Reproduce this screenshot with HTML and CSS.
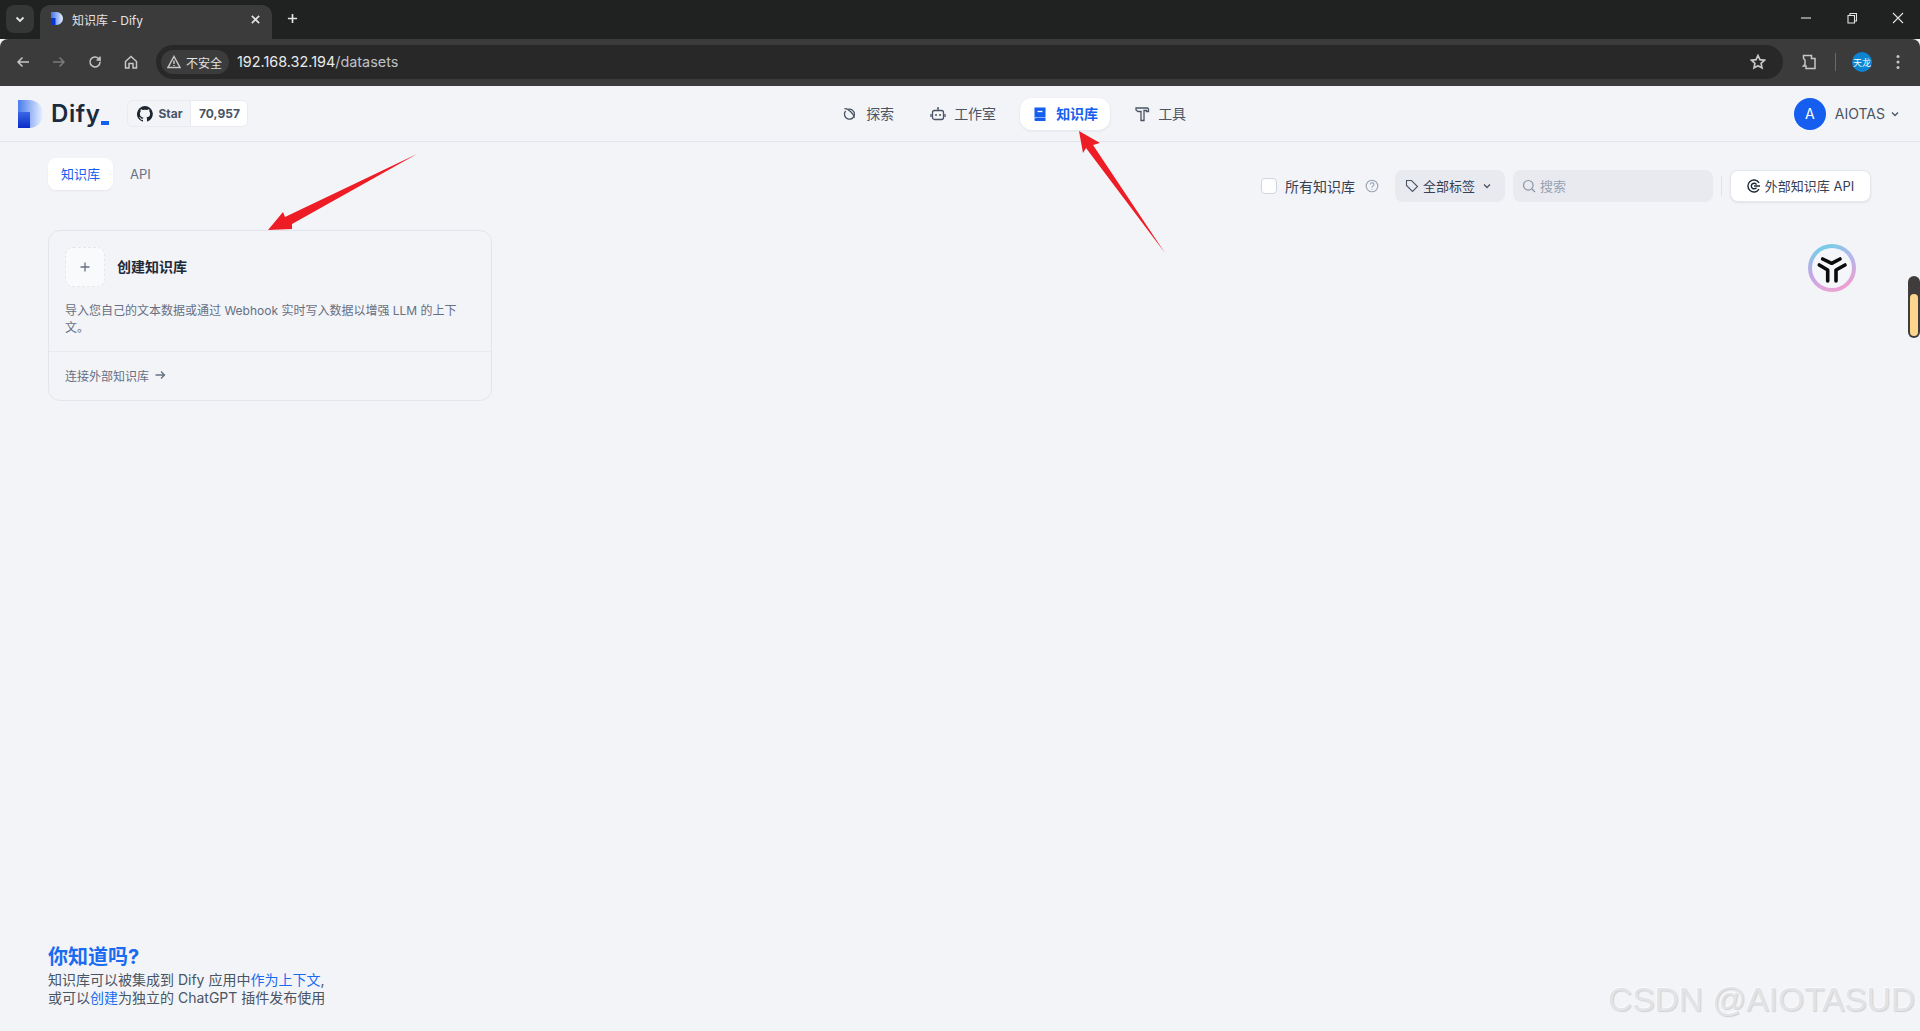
FILE: index.html
```html
<!DOCTYPE html>
<html lang="zh-CN">
<head>
<meta charset="utf-8">
<title>知识库 - Dify</title>
<link rel="stylesheet" href="styles.css">
</head>
<body>
<div class="browser">
  <div class="tabstrip">
    <div class="tab-search"><svg class="ic12" viewBox="0 0 12 12"><path d="M2.500 4.500 6 8l3.500-3.500" class="st-w2"/></svg></div>
    <div class="tab">
      <svg class="favicon" viewBox="0 0 14 14"><defs><linearGradient id="fg" x1="0" y1="0" x2="1" y2="0"><stop offset="0" stop-color="#3f72ea"/><stop offset="1" stop-color="#e8f0ff"/></linearGradient></defs><path d="M1 0h5.500a6.500 6.500 0 0 1 0 13H1z" fill="url(#fg)"/><path d="M1 6h4.500v7H1z" fill="#0b34d8"/></svg>
      <span class="tab-title">知识库 - Dify</span>
      <svg class="tab-close" viewBox="0 0 12 12"><path d="M2 2l8 8M10 2l-8 8" class="st-w2"/></svg>
    </div>
    <svg class="new-tab" viewBox="0 0 12 12"><path d="M6 1v10M1 6h10" class="st-w2"/></svg>
    <div class="win-btns">
      <svg class="win" viewBox="0 0 12 12"><path d="M1 6h10" class="st-w1"/></svg>
      <svg class="win" viewBox="0 0 12 12"><path d="M2 3.500h6.500V11H2zM4 3.500V1.500h6.500V9H8.500" class="st-w1"/></svg>
      <svg class="win" viewBox="0 0 12 12"><path d="M1 1l10 10M11 1L1 11" class="st-w1"/></svg>
    </div>
  </div>
  <div class="toolbar">
    <div class="tb-nav">
      <svg class="tb-ic" viewBox="0 0 14 14"><path d="M13 7H2M6.500 2.500 2 7l4.500 4.500" class="st-g"/></svg>
      <svg class="tb-ic dim" viewBox="0 0 14 14"><path d="M1 7h11M7.500 2.500 12 7l-4.500 4.500" class="st-g"/></svg>
      <svg class="tb-ic" viewBox="0 0 14 14"><path d="M12 7a5 5 0 1 1-1.500-3.600L12 5V1.500M12 5H8.500" class="st-g"/></svg>
      <svg class="tb-ic" viewBox="0 0 14 14"><path d="M1.500 6.500 7 1.500l5.500 5V13H9V8.500H5V13H1.500z" class="st-g"/></svg>
    </div>
    <div class="omnibox">
      <div class="chip">
        <svg class="chip-ic" viewBox="0 0 14 14"><path d="M7 1.500 13 12.500H1zM7 5.500v3.500M7 10v1" class="st-g"/></svg>
        <span>不安全</span>
      </div>
      <div class="url">192.168.32.194<span class="url-path">/datasets</span></div>
      <svg class="tb-ic star" viewBox="0 0 14 14"><path d="M7 1.300l1.700 3.700 4 .5-3 2.700.8 4L7 10.200l-3.500 2 .8-4-3-2.700 4-.5z" class="st-g"/></svg>
    </div>
    <svg class="tb-ext" viewBox="0 0 16 16"><path d="M2.500 1.500h8v3h3.500v10H5V12H2.500l1.500-1.500V6L2.500 4.500z" class="st-g"/></svg>
    <span class="tb-sep"></span>
    <span class="profile">天龙</span>
    <svg class="tb-menu" viewBox="0 0 4 16"><circle cx="2" cy="2.500" r="1.500"/><circle cx="2" cy="8" r="1.500"/><circle cx="2" cy="13.500" r="1.500"/></svg>
  </div>
</div>

<div class="app">
  <header class="header">
    <div class="brand">
      <div class="logo">
        <svg class="logo-mark" viewBox="0 0 25 28"><defs><linearGradient id="lg" x1="0" y1="0" x2="1" y2="0"><stop offset="0" stop-color="#4a7cec"/><stop offset="1" stop-color="#eaf1ff"/></linearGradient><linearGradient id="lg2" x1="0" y1="0" x2="0" y2="1"><stop offset="0" stop-color="#3a68e6"/><stop offset="1" stop-color="#0a2bc8"/></linearGradient></defs><path d="M0 0h11a14 14 0 0 1 0 28H0z" fill="url(#lg)"/><path d="M0 12h12v16H0z" fill="url(#lg2)"/></svg>
        <span class="logo-text">Dify</span><span class="logo-cursor"></span>
      </div>
      <div class="gh">
        <div class="gh-left">
          <svg class="gh-ic" viewBox="0 0 16 16"><path d="M8 0a8 8 0 0 0-2.500 15.600c.4.100.5-.2.500-.4v-1.400c-2.200.5-2.700-1-2.700-1-.4-.9-.9-1.200-.9-1.200-.7-.5.100-.5.100-.5.800.100 1.200.8 1.200.8.700 1.200 1.900.9 2.300.7.100-.5.300-.9.500-1.100-1.800-.2-3.600-.9-3.600-4 0-.9.300-1.600.8-2.100-.1-.2-.4-1 .1-2.100 0 0 .7-.2 2.200.8a7.600 7.600 0 0 1 4 0c1.500-1 2.200-.8 2.200-.8.400 1.100.2 1.900.1 2.100.5.600.8 1.300.8 2.100 0 3.100-1.900 3.700-3.700 3.900.3.300.6.800.6 1.500v2.200c0 .2.100.5.600.4A8 8 0 0 0 8 0z"/></svg>
          <span>Star</span>
        </div>
        <div class="gh-count">70,957</div>
      </div>
    </div>
    <nav class="nav">
      <a class="nav-item">
        <svg class="ic16" viewBox="0 0 16 16"><path d="M3.600 5A5 5 0 1 0 6 3.400" class="st-n"/><path d="M2.500 2.800c1.600-.8 4 .8 6.200 3s3.800 4.800 3.300 6.200" class="st-n"/></svg>
        <span>探索</span>
      </a>
      <a class="nav-item">
        <svg class="ic16" viewBox="0 0 16 16"><rect x="2.500" y="4.500" width="11" height="9" rx="2" class="st-n"/><path d="M8 4.500V2M1 8v3M15 8v3" class="st-n"/><circle cx="8" cy="1.800" r=".9" fill="#495464"/><circle cx="6" cy="9" r="1" fill="#495464"/><circle cx="10" cy="9" r="1" fill="#495464"/></svg>
        <span>工作室</span>
      </a>
      <a class="nav-item active">
        <svg class="ic16" viewBox="0 0 16 16"><path d="M2.500 1.500h11v10h-9a1.500 1.500 0 0 0-2 1V1.500zM2.500 13a1.500 1.500 0 0 1 1.500-1h9.500v3H4a1.500 1.500 0 0 1-1.500-2z" fill="#155eef"/><path d="M5.500 5.500h5" stroke="#fff" stroke-width="1.300"/></svg>
        <span>知识库</span>
      </a>
      <a class="nav-item">
        <svg class="ic16" viewBox="0 0 16 16"><path d="M2 2h11.500l1 1v2.500h-2V4.500H10V14.500H7V5.500H4L2 4z" class="st-n"/></svg>
        <span>工具</span>
      </a>
    </nav>
    <div class="account">
      <span class="avatar">A</span>
      <span class="account-name">AIOTAS</span>
      <svg class="chev" viewBox="0 0 10 10"><path d="M2 3.500 5 6.500l3-3" class="st-n"/></svg>
    </div>
  </header>

  <main class="main">
    <div class="topbar">
      <div class="tabs">
        <span class="seg active">知识库</span>
        <span class="seg">API</span>
      </div>
      <div class="filters">
        <label class="all-sets">
          <span class="check"></span>
          <span>所有知识库</span>
          <svg class="ic14 help" viewBox="0 0 14 14"><circle cx="7" cy="7" r="5.800" class="st-l"/><path d="M5.300 5.500a1.800 1.800 0 1 1 2.600 1.600C7.300 7.500 7 7.800 7 8.500M7 9.800v.9" class="st-l"/></svg>
        </label>
        <div class="tag-btn">
          <svg class="ic14" viewBox="0 0 14 14"><path d="M1.500 1.500h5l6 6-5 5-6-6zM4 4v.1" class="st-d"/></svg>
          <span>全部标签</span>
          <svg class="chev" viewBox="0 0 10 10"><path d="M2 3.500 5 6.500l3-3" class="st-n"/></svg>
        </div>
        <div class="search">
          <svg class="ic14" viewBox="0 0 14 14"><circle cx="6.300" cy="6.300" r="4.800" class="st-s"/><path d="M10 10l3 3" class="st-s"/></svg>
          <span>搜索</span>
        </div>
        <span class="vsep"></span>
        <div class="api-btn">
          <svg class="ic14" viewBox="0 0 14 14"><path d="M12 3.800A6 6 0 1 0 12 10.200" class="st-k"/><path d="M9.500 5.500A2.800 2.800 0 1 0 9.500 8.500M7 7h6" class="st-k"/></svg>
          <span>外部知识库 API</span>
        </div>
      </div>
    </div>

    <section class="card">
      <div class="card-body">
        <div class="card-head">
          <div class="plus"><svg class="ic12" viewBox="0 0 12 12"><path d="M6 1.500v9M1.500 6h9" class="st-p"/></svg></div>
          <h2 class="card-title">创建知识库</h2>
        </div>
        <p class="card-desc">导入您自己的文本数据或通过 Webhook 实时写入数据以增强 LLM 的上下文。</p>
      </div>
      <div class="card-foot">
        <span>连接外部知识库</span>
        <svg class="ic12" viewBox="0 0 12 12"><path d="M1.500 6h9M7 2.500 10.500 6 7 9.500" class="st-p"/></svg>
      </div>
    </section>

    <footer class="tip">
      <h3 class="tip-title">你知道吗?</h3>
      <p class="tip-text">知识库可以被集成到 Dify 应用中<a>作为上下文</a>,<br>或可以<a>创建</a>为独立的 ChatGPT 插件发布使用</p>
    </footer>
  </main>
</div>

<div class="bot">
  <svg class="bot-y" viewBox="4 4 40 40"><path d="M14.700 15l9 4.300 8.300-4.300M11.300 21l8.400 5v11M37 21l-9 5v11" fill="none" stroke="#0b0b0b" stroke-width="3.600" stroke-linecap="round" stroke-linejoin="round"/></svg>
</div>
<div class="pill-widget"><span class="pill-fill"></span></div>

<svg class="arrows" viewBox="0 0 1920 1031">
  <polygon points="1079,131 1100,143 1093,145 1165,253 1086,148 1083,153" fill="#ee1c25"/>
  <polygon points="268,230 283,212 285,217 417,154 292,224 292,229" fill="#ee1c25"/>
</svg>
<div class="watermark">CSDN @AIOTASUD</div>
</body>
</html>
```

FILE: styles.css
```css
* { box-sizing: border-box; }
html, body { margin: 0; padding: 0; height: 100%; overflow: hidden; }
body {
  font-family: Inter, "Noto Sans CJK SC", sans-serif;
  background: #f2f4f8;
  color: #354052;
  display: flex;
  flex-direction: column;
  position: relative;
}
svg { display: block; flex: none; }
h2, h3, p { margin: 0; }

.st-w2 { fill: none; stroke: #e3e3e3; stroke-width: 1.800; }
.st-w1 { fill: none; stroke: #e3e3e3; stroke-width: 1.100; }
.st-g { fill: none; stroke: #c7c7c7; stroke-width: 1.500; }
.st-n { fill: none; stroke: #495464; stroke-width: 1.300; }
.st-l { fill: none; stroke: #98a2b2; stroke-width: 1.100; }
.st-d { fill: none; stroke: #495464; stroke-width: 1.100; }
.st-s { fill: none; stroke: #8a94a6; stroke-width: 1.200; }
.st-k { fill: none; stroke: #1f2a37; stroke-width: 1.400; }
.st-p { fill: none; stroke: #676f83; stroke-width: 1.300; }

.ic12 { width: 12px; height: 12px; }
.ic14 { width: 14px; height: 14px; }
.ic16 { width: 16px; height: 16px; }

/* browser chrome */
.browser { flex: none; }
.tabstrip {
  height: 39px;
  background: #202221;
  display: flex;
  align-items: flex-start;
  padding: 5px 0 0 6px;
}
.tab-search {
  width: 28px; height: 28px;
  border-radius: 8px;
  background: #353736;
  display: flex; align-items: center; justify-content: center;
}
.tab {
  width: 232px; height: 34px;
  margin-left: 6px;
  background: #3b3b3b;
  border-radius: 10px 10px 0 0;
  display: flex; align-items: center;
  padding: 0 11px 6px 10px;
}
.favicon { width: 14px; height: 14px; }
.tab-title { margin-left: 8px; font-size: 12px; color: #e3e3e3; flex: 1; }
.tab-close { width: 11px; height: 11px; }
.new-tab { width: 11px; height: 11px; margin: 8px 0 0 15px; }
.win-btns { margin-left: auto; display: flex; gap: 34px; padding: 7px 16px 0 0; }
.win { width: 12px; height: 12px; }

.toolbar {
  height: 47px;
  background: #3b3b3b;
  border-radius: 8px 8px 0 0;
  display: flex; align-items: center;
  padding: 0 16px 1px 16px;
}
.tb-nav { display: flex; gap: 22px; width: 140px; }
.tb-ic { width: 14px; height: 14px; }
.tb-ic.dim { opacity: .45; }
.omnibox {
  width: 1627px; height: 34px;
  background: #282828;
  border-radius: 17px;
  display: flex; align-items: center;
  padding: 0 17px 0 5px;
}
.chip {
  width: 68px; height: 24px;
  background: #3c3c3c;
  border-radius: 12px;
  display: flex; align-items: center; gap: 5px;
  padding-left: 6px;
  font-size: 12px; color: #e3e3e3;
}
.chip-ic { width: 14px; height: 14px; }
.url { margin-left: 8px; padding-bottom: 2px; font-size: 14.400px; color: #e8eaed; flex: 1; }
.url-path { color: #bdc1c6; }
.star { width: 16px; height: 16px; }
.tb-ext { width: 16px; height: 16px; margin-left: 18px; }
.tb-sep { width: 1px; height: 18px; background: #6a6a6a; margin-left: 18px; }
.profile {
  width: 20px; height: 20px;
  margin-left: 16px;
  border-radius: 50%;
  background: #0d84d2;
  color: #fff;
  font-size: 9px;
  display: flex; align-items: center; justify-content: center;
}
.tb-menu { width: 4px; height: 16px; margin-left: 24px; fill: #c7c7c7; }

/* app */
.app { flex: 1; display: flex; flex-direction: column; min-height: 0; }
.header {
  flex: none;
  height: 56px;
  border-bottom: 1px solid #e2e5eb;
  display: flex; align-items: center; justify-content: space-between;
  padding: 0 20px 0 18px;
}
.brand { display: flex; align-items: center; gap: 18px; }
.logo { display: flex; align-items: flex-end; height: 32px; }
.logo-mark { width: 25px; height: 28px; margin: 0 8px 2px 0; }
.logo-text {
  font-size: 24px; font-weight: 600; line-height: 32px;
  letter-spacing: .6px; color: #1c2a3f;
}
.logo-cursor { width: 8px; height: 4px; background: #155eef; margin: 0 0 5px 1px; }
.gh {
  display: flex; height: 27px;
  border: 1px solid #e9ebf0;
  border-radius: 6px;
  overflow: hidden;
  font-size: 12px; font-weight: 700;
}
.gh-left {
  width: 63px;
  display: flex; align-items: center; gap: 5px;
  padding-left: 9px;
  color: #475467;
  border-right: 1px solid #e9ebf0;
}
.gh-ic { width: 16px; height: 16px; fill: #1d2531; }
.gh-count { width: 56px; background: #fff; display: flex; align-items: center; justify-content: center; color: #475467; }

.nav { display: flex; gap: 12px; margin-right: 14px; }
.nav-item {
  height: 32px;
  padding: 0 12px 2px;
  border-radius: 12px;
  display: flex; align-items: center; gap: 8px;
  font-size: 14px;
  color: #4b5565;
}
.nav-item svg { margin-top: 2px; }
.nav-item.active {
  background: #fff;
  color: #155eef;
  font-weight: 600;
  box-shadow: 0 1px 3px rgba(16, 24, 40, .08);
}
.account { display: flex; align-items: center; }
.avatar {
  width: 32px; height: 32px;
  border-radius: 50%;
  background: #155eef;
  color: #fff;
  font-size: 14px;
  display: flex; align-items: center; justify-content: center;
}
.account-name { margin-left: 9px; font-size: 14px; color: #4b5565; }
.chev { width: 10px; height: 10px; margin-left: 5px; }

.main { flex: 1; display: flex; flex-direction: column; padding: 0 49px 0 48px; min-height: 0; }
.topbar { display: flex; justify-content: space-between; align-items: flex-start; height: 88px; padding-top: 16px; }
.tabs { display: flex; gap: 0; }
.seg {
  height: 32px; padding: 0 13px 1px;
  border-radius: 8px;
  display: flex; align-items: center;
  font-size: 13px; color: #676f83;
}
.seg.active { background: #fff; color: #155eef; box-shadow: 0 1px 2px rgba(16, 24, 40, .05); margin-right: 4px; padding-bottom: 2px; }
.filters { display: flex; align-items: center; margin-top: 12px; height: 32px; font-size: 13px; color: #354052; }
.all-sets { display: flex; align-items: center; gap: 8px; margin-right: 16px; font-size: 14px; padding-bottom: 1px; margin-left: -2px; }
.help { margin-left: 2px; margin-top: 1px; }
.check {
  width: 16px; height: 16px;
  background: #fff;
  border: 1px solid #d0d5dd;
  border-radius: 4px;
  margin-top: 1px;
}
.tag-btn {
  width: 110px; height: 32px;
  background: #e8eaef;
  border-radius: 8px;
  display: flex; align-items: center; gap: 4px;
  padding: 0 0 1px 10px;
  font-size: 13px;
  margin-right: 8px;
}
.tag-btn .chev { margin-left: 3px; }
.search {
  width: 200px; height: 32px;
  background: #e8eaef;
  border-radius: 8px;
  display: flex; align-items: center; gap: 4px;
  padding: 0 0 1px 9px;
  color: #98a2b2;
}
.vsep { width: 1px; height: 20px; background: #dfe2e8; margin: 0 8px; }
.api-btn {
  width: 141px; height: 32px;
  background: #fff;
  border: 1px solid #e4e7ec;
  border-radius: 8px;
  box-shadow: 0 1px 2px rgba(16, 24, 40, .08);
  display: flex; align-items: center; justify-content: center; gap: 4px;
  color: #354052;
  font-size: 13px;
  padding-bottom: 1px;
}

.card {
  width: 444px; height: 171px;
  border: 1px solid #e2e5eb;
  border-radius: 12px;
  display: flex; flex-direction: column;
}
.card-body { flex: 1; padding: 16px 16px 0 16px; border-bottom: 1px solid #e8eaef; }
.card-head { display: flex; align-items: center; gap: 12px; }
.plus {
  width: 40px; height: 40px;
  background: #f9fafb;
  border: 1px dashed #e4e7ec;
  border-radius: 8px;
  display: flex; align-items: center; justify-content: center;
}
.card-title { font-size: 14px; font-weight: 600; color: #1f2a37; padding-bottom: 2px; }
.card-desc { margin-top: 15px; font-size: 12px; line-height: 17px; color: #676f83; }
.card-foot {
  height: 48px;
  padding: 0 16px 2px;
  display: flex; align-items: center; gap: 5px;
  font-size: 12px; color: #676f83;
}

.tip { margin-top: auto; padding-bottom: 24px; }
.tip-title { font-size: 20px; line-height: 28px; font-weight: 700; color: #1a6bf0; }
.tip-text { font-size: 14px; line-height: 18px; color: #495464; }
.tip-text a { color: #1a6bf0; }

/* floating items */
.bot {
  position: absolute; left: 1808px; top: 244px;
  width: 48px; height: 48px;
  border-radius: 50%;
  padding: 4px;
  background: conic-gradient(from 0deg, #7ccbe6, #b6b6ea 60deg, #e99fd2 130deg, #e8a4d6 190deg, #c6a6e6 250deg, #7ccbe6 320deg);
}
.bot-y {
  width: 40px; height: 40px;
  border-radius: 50%;
  background: #f4f6fa;
}
.pill-widget {
  position: absolute; left: 1908px; top: 276px;
  width: 12px; height: 62px;
  background: #413c3c;
  border-radius: 6px;
  padding: 18px 2px 2px 2px;
  overflow: hidden;
}
.pill-fill { display: block; height: 100%; background: #fdd68d; border-radius: 4px; }
.arrows { position: absolute; left: 0; top: 0; width: 1920px; height: 1031px; pointer-events: none; }
.watermark {
  position: absolute; right: 5px; top: 978px;
  font-family: "Liberation Sans", sans-serif;
  font-size: 33.500px; line-height: 44px;
  color: #e2e3e6;
  text-shadow: 1px 1px 1px #cfd0d3, -1px -1px 0 #fbfbfd;
}
```
